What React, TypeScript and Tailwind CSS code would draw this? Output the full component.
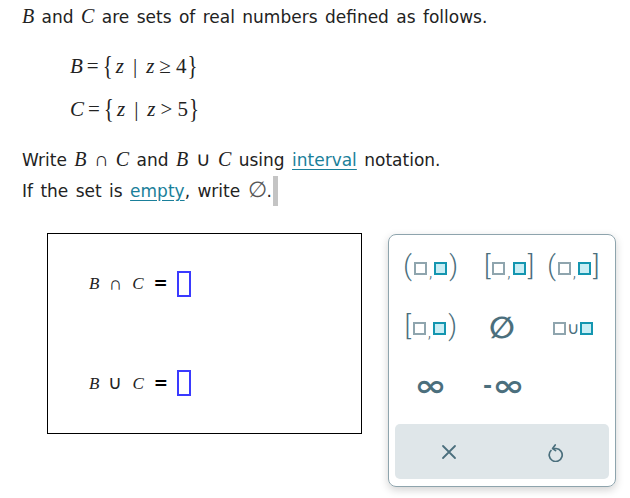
import React from 'react';

const sans = "font-['DejaVu_Sans',Verdana,sans-serif]";
const serif = "font-['Liberation_Serif','Times_New_Roman',serif]";

const Gray = () => <span className="inline-block w-[13px] h-[13px] border-2 border-[#8fa5ae] bg-white" />;
const Teal = () => <span className="inline-block w-[13px] h-[13px] border-2 border-[#1496b0] bg-[#c9eef5]" />;

const Interval: React.FC<{ l: string; r: string }> = ({ l, r }) => (
  <span className="flex items-center text-[#4b6f7d] text-[27px] leading-none font-['Roboto',sans-serif] font-light">
    <span className="mr-[2px] -mt-[3px]">{l}</span>
    <Gray />
    <span className="text-[17px] mx-[2px] self-end -mb-[1px]">,</span>
    <Teal />
    <span className="ml-[2px] -mt-[3px]">{r}</span>
  </span>
);

const Key: React.FC<{ children: React.ReactNode }> = ({ children }) => (
  <button className="h-[60px] flex items-center justify-center">{children}</button>
);

const AnswerRow: React.FC<{ op: string }> = ({ op }) => (
  <div className="flex items-center h-[100px] pl-[41px]">
    <span className={`${serif} italic text-[17px] text-[#222]`}>B</span>
    <span className={`${serif} text-[19px] text-[#222] ml-[9px]`}>{op}</span>
    <span className={`${serif} italic text-[17px] text-[#222] ml-[10px]`}>C</span>
    <span className={`${sans} font-bold text-[17px] text-black ml-[10px]`}>=</span>
    <span className="ml-[9px] w-[14px] h-[26px] border-2 border-[#3a3aff]" />
  </div>
);

const Brace: React.FC<{ c: string }> = ({ c }) => (
  <span className="inline-block scale-y-[1.3] font-light">{c}</span>
);

const Set: React.FC<{ name: string; rel: string; n: string }> = ({ name, rel, n }) => (
  <p className="flex items-center">
    <span className="italic">{name}</span>
    <span className="ml-[4px]">=</span>
    <span className="ml-[4px]"><Brace c="{" /></span>
    <span className="italic ml-[3px]">z</span>
    <span className="mx-[9px]">|</span>
    <span className="italic">z</span>
    <span className="mx-[5px]">{rel}</span>
    <span>{n}</span>
    <span className="ml-[1px]"><Brace c="}" /></span>
  </p>
);

const Inf = () => <span className="inline-block scale-x-[1.3]">∞</span>;

export default function App() {
  return (
    <div className={`w-[630px] h-[498px] bg-white ${sans} text-[17px] [word-spacing:2px] text-[#222] overflow-hidden`}>
      <div className="pl-[22px] pt-[4px]">
        <p className="leading-[24px]">
          <span className={`${serif} italic text-[20px]`}>B</span> and{' '}
          <span className={`${serif} italic text-[20px]`}>C</span> are sets of real numbers defined as follows.
        </p>
        <div className={`${serif} text-[21px] pl-[48px] mt-[22px] leading-[30px] [word-spacing:0px]`}>
          <Set name="B" rel="≥" n="4" />
          <div className="h-[13px]" />
          <Set name="C" rel=">" n="5" />
        </div>
        <p className="mt-[21px] leading-[29px]">
          Write <span className={`${serif} italic text-[20px]`}>B</span>{' '}
          <span className={`${serif} text-[20px]`}>∩</span>{' '}
          <span className={`${serif} italic text-[20px]`}>C</span> and{' '}
          <span className={`${serif} italic text-[20px]`}>B</span>{' '}
          <span className={`${serif} text-[20px]`}>∪</span>{' '}
          <span className={`${serif} italic text-[20px]`}>C</span> using{' '}
          <span className="text-[#1a7f9a] underline underline-offset-[3px]">interval</span> notation.
        </p>
        <p className="leading-[29px] flex items-center">
          <span>
            If the set is <span className="text-[#1a7f9a] underline underline-offset-[3px]">empty</span>, write{' '}
            <span className={`${serif} text-[22px] text-[#555]`}>∅</span>.
          </span>
          <span className="inline-block w-[5px] h-[30px] bg-[#c4c4c4] ml-[1px]" />
        </p>
      </div>

      <div className="flex mt-[27px] [word-spacing:0px]">
        <div className="ml-[47px] w-[315px] h-[201px] border border-black flex flex-col justify-center">
          <AnswerRow op="∩" />
          <AnswerRow op="∪" />
        </div>

        <div className="ml-[26px] mt-[1px] w-[228px] h-[253px] border border-[#8ea4ad] rounded-[8px] shadow-[0_3px_8px_rgba(0,0,0,0.18)] px-[6px] pt-[3px] pb-[7px] flex flex-col">
          <div className="grid grid-cols-3">
            <Key><Interval l="(" r=")" /></Key>
            <Key><span className="ml-[14px]"><Interval l="[" r="]" /></span></Key>
            <Key><Interval l="(" r="]" /></Key>
            <Key><Interval l="[" r=")" /></Key>
            <Key>
              <span className="text-[#4b6f7d] text-[30px] leading-none font-['DejaVu_Sans',sans-serif] font-bold">∅</span>
            </Key>
            <Key>
              <span className="flex items-center gap-[1px]">
                <Gray />
                <span className="text-[#4b6f7d] text-[17px] leading-none font-['Roboto',sans-serif]">∪</span>
                <Teal />
              </span>
            </Key>
            <Key>
              <span className="text-[#4b6f7d] text-[30px] leading-none font-['DejaVu_Sans',sans-serif] font-bold -mt-[4px]">
                <Inf />
              </span>
            </Key>
            <Key>
              <span className="text-[#4b6f7d] text-[30px] leading-none font-['DejaVu_Sans',sans-serif] font-bold -mt-[4px] flex items-center">
                <span className="text-[22px] mr-[4px]">-</span>
                <Inf />
              </span>
            </Key>
            <div />
          </div>
          <div className="mt-auto h-[55px] bg-[#dfe6e9] rounded-[5px] grid grid-cols-2">
            <button className="flex items-center justify-center">
              <svg width="16" height="16" viewBox="0 0 16 16" fill="none" stroke="#4b6f7d" strokeWidth="1.8" strokeLinecap="round">
                <path d="M2 2 L14 14 M14 2 L2 14" />
              </svg>
            </button>
            <button className="flex items-center justify-center">
              <svg width="18" height="21" viewBox="0 0 18 21" fill="none" stroke="#4b6f7d" strokeWidth="1.7" strokeLinecap="round" strokeLinejoin="round">
                <path d="M4 9.5 A6.5 6.5 0 1 0 9 7.5 L6.5 7.5" />
                <path d="M8.2 4 L5.6 7.5 L8.6 9.6" />
              </svg>
            </button>
          </div>
        </div>
      </div>
    </div>
  );
}
